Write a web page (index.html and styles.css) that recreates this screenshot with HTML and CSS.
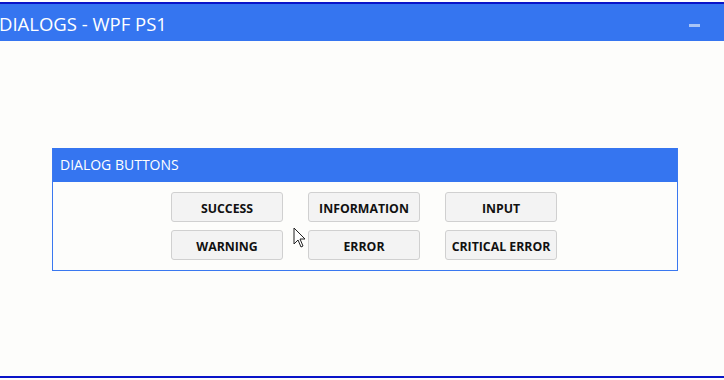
FILE: index.html
```html
<!DOCTYPE html>
<html lang="en">
<head>
    <meta charset="UTF-8">
    <title>Dialogs - WPF PS1</title>
    <link rel="stylesheet" href="styles.css">
</head>
<body>
    <div class="window">
        <div class="titlebar">
            <span class="title">DIALOGS - WPF PS1</span>
            <span class="minimize"></span>
        </div>
        <div class="content">
            <div class="group">
                <div class="group-header">DIALOG BUTTONS</div>
                <div class="buttons">
                    <button>SUCCESS</button>
                    <button>INFORMATION</button>
                    <button>INPUT</button>
                    <button>WARNING</button>
                    <button>ERROR</button>
                    <button>CRITICAL ERROR</button>
                </div>
            </div>
            <svg class="cursor" width="14" height="22" viewBox="0 0 14 22">
                <path d="M1 1 L1 17 L5 13 L8 20 L10 19 L7 12 L12 12 Z" fill="#fff" stroke="#222" stroke-width="1"/>
            </svg>
        </div>
    </div>
</body>
</html>
```

FILE: styles.css
```css
body {
    margin: 0;
    background: #fdfdfb;
    font-family: "Open Sans", "Noto Sans", sans-serif;
}
.window {
    padding-top: 2px;
    height: 374px;
    border-bottom: 2px solid #0a14c8;
    position: relative;
}
.titlebar {
    border-top: 2px solid #0a14c8;
    background: #3575f0;
    height: 37px;
    display: flex;
    align-items: center;
    justify-content: space-between;
}
.title {
    color: #fff;
    font-size: 18.5px;
    margin-left: -1px;
    margin-top: 1px;
}
.minimize {
    width: 11px;
    height: 3px;
    background: #a8c4f6;
    margin-right: 24px;
    margin-top: 6px;
}
.content {
    padding-top: 107px;
}
.group {
    margin-left: 52px;
    width: 624px;
    border: 1px solid #3a78f0;
    border-top: none;
}
.group-header {
    background: #3575f0;
    color: #fff;
    font-size: 14px;
    height: 34px;
    line-height: 34px;
    padding-left: 7px;
}
.buttons {
    display: grid;
    grid-template-columns: repeat(3, 112px);
    column-gap: 25px;
    row-gap: 8px;
    padding: 10px 0 10px 118px;
}
button {
    height: 30px;
    background: #f3f3f3;
    border: 1px solid #d0d0d0;
    border-radius: 3px;
    font-family: "Open Sans", "Noto Sans", sans-serif;
    font-weight: bold;
    font-size: 12.3px;
    color: #111;
    padding: 2px 0 0 0;
}
.cursor {
    position: absolute;
    left: 293px;
    top: 227px;
}
```
